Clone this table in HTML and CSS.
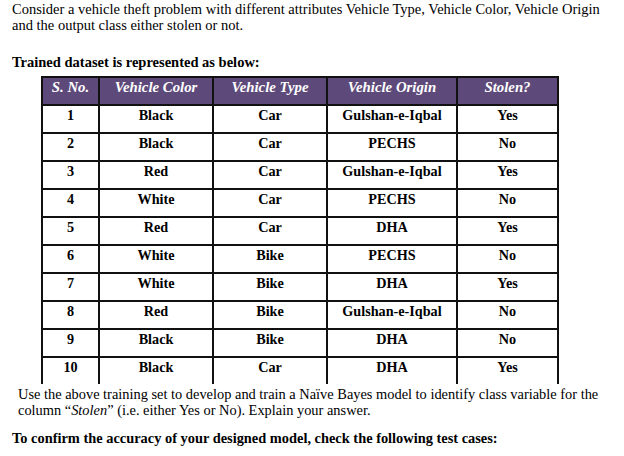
FILE: index.html
```html
<!DOCTYPE html>
<html>
<head>
<meta charset="utf-8">
<link rel="stylesheet" href="styles.css">
</head>
<body>
<div class="page">
  <p class="intro">Consider a vehicle theft problem with different attributes Vehicle Type, Vehicle Color, Vehicle Origin and the output class either stolen or not.</p>
  <p class="heading">Trained dataset is represented as below:</p>
  <table class="data">
    <colgroup>
      <col class="c1"><col class="c2"><col class="c3"><col class="c4"><col class="c5">
    </colgroup>
    <thead>
      <tr><th>S. No.</th><th>Vehicle Color</th><th>Vehicle Type</th><th>Vehicle Origin</th><th>Stolen?</th></tr>
    </thead>
    <tbody>
      <tr><td>1</td><td>Black</td><td>Car</td><td>Gulshan-e-Iqbal</td><td>Yes</td></tr>
      <tr><td>2</td><td>Black</td><td>Car</td><td>PECHS</td><td>No</td></tr>
      <tr><td>3</td><td>Red</td><td>Car</td><td>Gulshan-e-Iqbal</td><td>Yes</td></tr>
      <tr><td>4</td><td>White</td><td>Car</td><td>PECHS</td><td>No</td></tr>
      <tr><td>5</td><td>Red</td><td>Car</td><td>DHA</td><td>Yes</td></tr>
      <tr><td>6</td><td>White</td><td>Bike</td><td>PECHS</td><td>No</td></tr>
      <tr><td>7</td><td>White</td><td>Bike</td><td>DHA</td><td>Yes</td></tr>
      <tr><td>8</td><td>Red</td><td>Bike</td><td>Gulshan-e-Iqbal</td><td>No</td></tr>
      <tr><td>9</td><td>Black</td><td>Bike</td><td>DHA</td><td>No</td></tr>
      <tr class="last"><td>10</td><td>Black</td><td>Car</td><td>DHA</td><td>Yes</td></tr>
    </tbody>
  </table>
  <p class="after">Use the above training set to develop and train a Naïve Bayes model to identify class variable for the column “<em>Stolen</em>” (i.e. either Yes or No). Explain your answer.</p>
  <p class="heading2">To confirm the accuracy of your designed model, check the following test cases:</p>
</div>
</body>
</html>
```
FILE: styles.css
```css
html, body {
  margin: 0;
  padding: 0;
  background: #fff;
}
body {
  font-family: "Liberation Serif", "Times New Roman", serif;
  color: #000;
  width: 624px;
  height: 456px;
  overflow: hidden;
}
.page {
  padding: 2px 0 0 12px;
}
p {
  margin: 0;
}
.intro {
  font-size: 14.5px;
  line-height: 15.5px;
  width: 605px;
}
.heading {
  font-size: 14.5px;
  font-weight: bold;
  line-height: 16px;
  margin-top: 21px;
}
.data {
  margin-top: 6px;
  margin-left: 29px;
  border-collapse: collapse;
  table-layout: fixed;
  width: 516px;
}
.c1 { width: 57px; }
.c2 { width: 114px; }
.c3 { width: 114px; }
.c4 { width: 130px; }
.c5 { width: 101px; }
.data th {
  background: #5e4a7a;
  color: #fff;
  font-style: italic;
  font-weight: bold;
  font-size: 14.8px;
  height: 25px;
  padding: 1px 0 0 0;
  vertical-align: top;
  line-height: 16px;
  border: 2px solid #111;
}
.data td {
  font-weight: bold;
  font-size: 14.2px;
  text-align: center;
  height: 25px;
  padding: 1px 0 0 0;
  vertical-align: top;
  line-height: 16px;
  border: 2px solid #111;
}
.data tr.last td {
  border-bottom: none;
}
.after {
  font-size: 14.4px;
  line-height: 16px;
  padding-left: 6px;
  width: 600px;
  margin-top: 2px;
}
.heading2 {
  font-size: 14.4px;
  font-weight: bold;
  line-height: 16px;
  margin-top: 12px;
}
```
